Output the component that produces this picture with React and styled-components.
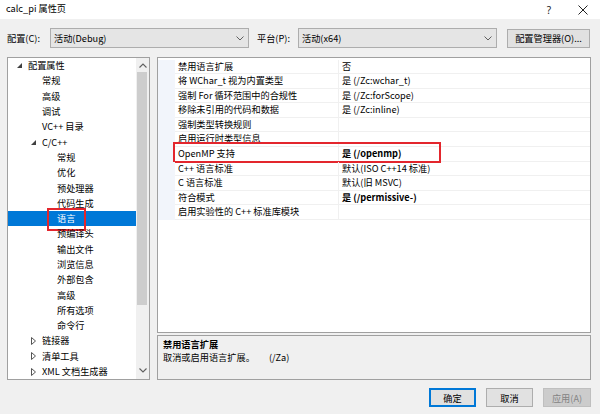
import React from 'react';
import styled, { createGlobalStyle } from 'styled-components';

const Global = createGlobalStyle`
  html, body { margin: 0; padding: 0; background: #f0f0f0; }
  body {
    font-family: "Noto Sans CJK SC", "Noto Sans", sans-serif;
    font-size: 9.2px;
    color: #000;
  }
  #root { width: 600px; height: 414px; }
`;

const Window = styled.div`
  width: 600px;
  height: 414px;
  display: flex;
  flex-direction: column;
  background: #f0f0f0;
  overflow: hidden;
`;

const TitleBar = styled.div`
  height: 19px;
  background: #fff;
  display: flex;
  align-items: center;
  padding-left: 6px;
`;

const Title = styled.div`
  flex: 1;
  line-height: 17px;
  margin-bottom: 2px;
`;

const TitleButton = styled.div`
  width: 34px;
  height: 19px;
  display: flex;
  align-items: center;
  justify-content: center;
  color: #222;
  font-family: "Noto Sans", sans-serif;
  font-size: 10px;
`;

const ConfigRow = styled.div`
  margin-top: 9px;
  height: 20px;
  display: flex;
  align-items: center;
  padding-left: 7px;
`;

const Label = styled.div`
  width: ${p => p.$w}px;
  margin-left: ${p => p.$ml || 0}px;
  line-height: 20px;
`;

const Select = styled.div`
  width: 199px;
  height: 20px;
  box-sizing: border-box;
  border: 1px solid #adadad;
  background: #e5e5e5;
  display: flex;
  align-items: center;
  padding: 0 3px 0 3px;
`;

const SelectText = styled.div`
  flex: 1;
  line-height: 18px;
`;

const Chevron = styled.svg`
  width: 8px;
  height: 5px;
  margin-right: 1px;
`;

const PushButton = styled.div`
  width: ${p => p.$w}px;
  height: ${p => p.$h}px;
  margin-left: ${p => p.$ml || 0}px;
  box-sizing: border-box;
  border: 1px solid ${p => (p.$primary ? '#0078d7' : p.$disabled ? '#bfbfbf' : '#adadad')};
  box-shadow: ${p => (p.$primary ? 'inset 0 0 0 1px #0078d7' : 'none')};
  background: ${p => (p.$disabled ? '#cccccc' : '#e1e1e1')};
  color: ${p => (p.$disabled ? '#838383' : '#000')};
  display: flex;
  align-items: center;
  justify-content: center;
  line-height: 14px;
`;

const Main = styled.div`
  margin-top: 9px;
  height: 323px;
  display: flex;
  gap: 7px;
  padding-left: 7px;
`;

const Tree = styled.div`
  width: 143px;
  box-sizing: border-box;
  border: 1px solid #a0a0a0;
  background: #fff;
  display: flex;
`;

const TreeList = styled.div`
  flex: 1;
  display: flex;
  flex-direction: column;
`;

const TreeRow = styled.div`
  position: relative;
  height: 15.3px;
  flex: 0 0 15.3px;
  display: flex;
  align-items: center;
  padding-left: ${p => p.$indent}px;
  background: ${p => (p.$selected ? '#0078d7' : 'transparent')};
  color: ${p => (p.$selected ? '#fff' : '#000')};
  white-space: nowrap;
`;

const ArrowSlot = styled.div`
  width: 11px;
  height: 15px;
  display: flex;
  align-items: center;
`;

const TreeLabel = styled.span`
  line-height: 15px;
`;

const Annotation = styled.div`
  position: absolute;
  left: ${p => p.$left}px;
  top: ${p => p.$top}px;
  width: ${p => p.$width}px;
  height: ${p => p.$height}px;
  box-sizing: border-box;
  border: 2px solid #e3262d;
  pointer-events: none;
`;

const ScrollBar = styled.div`
  width: 13px;
  background: #f0f0f0;
  display: flex;
  flex-direction: column;
`;

const ScrollArrow = styled.div`
  height: ${p => p.$h}px;
  display: flex;
  align-items: center;
  justify-content: center;
`;

const ScrollTrack = styled.div`
  flex: 1;
  display: flex;
  flex-direction: column;
  padding: 0 2px 0 1px;
`;

const Thumb = styled.div`
  height: 233px;
  background: #cdcdcd;
`;

const RightColumn = styled.div`
  width: 434px;
  display: flex;
  flex-direction: column;
  gap: 2px;
`;

const Grid = styled.div`
  flex: 1;
  box-sizing: border-box;
  border: 1px solid #a0a0a0;
  background: #fff;
  padding-top: 1.5px;
  display: flex;
  flex-direction: column;
`;

const GridRow = styled.div`
  position: relative;
  height: 14.6px;
  flex: 0 0 14.6px;
  display: grid;
  grid-template-columns: 17px 164px 1fr;
`;

const Gutter = styled.div`
  background: #f2f5fb;
`;

const Cell = styled.div`
  box-sizing: border-box;
  padding-left: 3px;
  border-bottom: 1px solid #f0f0f0;
  border-right: ${p => (p.$name ? '1px solid #f0f0f0' : 'none')};
  line-height: 13.6px;
  font-weight: ${p => (p.$bold ? 700 : 400)};
  white-space: nowrap;
  overflow: hidden;
`;

const Description = styled.div`
  height: 45px;
  box-sizing: border-box;
  border: 1px solid #a0a0a0;
  padding: 2px 5px;
`;

const DescTitle = styled.div`
  font-weight: 700;
  line-height: 13px;
`;

const DescText = styled.div`
  line-height: 13px;
`;

const DescSwitch = styled.span`
  margin-left: 14px;
`;

const Footer = styled.div`
  margin-top: 8px;
  display: flex;
  justify-content: flex-end;
  padding-right: 9px;
  gap: 10px;
`;

const ExpandedArrow = () => (
  <svg width="5" height="5" viewBox="0 0 5 5">
    <polygon points="5,0 5,5 0,5" fill="#404040" />
  </svg>
);

const CollapsedArrow = () => (
  <svg width="5" height="8" viewBox="0 0 5 8">
    <polygon points="0.5,0.5 4.5,4 0.5,7.5" fill="none" stroke="#555" strokeWidth="1" />
  </svg>
);

const SmallChevron = ({ up }) => (
  <svg width="8" height="5" viewBox="0 0 8 5">
    <polyline
      points={up ? '0.5,4.5 4,1 7.5,4.5' : '0.5,0.5 4,4 7.5,0.5'}
      fill="none"
      stroke="#606060"
      strokeWidth="1.1"
    />
  </svg>
);

const treeItems = [
  { label: '配置属性', level: 0, arrow: 'open' },
  { label: '常规', level: 1 },
  { label: '高级', level: 1 },
  { label: '调试', level: 1 },
  { label: 'VC++ 目录', level: 1 },
  { label: 'C/C++', level: 1, arrow: 'open' },
  { label: '常规', level: 2 },
  { label: '优化', level: 2 },
  { label: '预处理器', level: 2 },
  { label: '代码生成', level: 2 },
  { label: '语言', level: 2, selected: true },
  { label: '预编译头', level: 2 },
  { label: '输出文件', level: 2 },
  { label: '浏览信息', level: 2 },
  { label: '外部包含', level: 2 },
  { label: '高级', level: 2 },
  { label: '所有选项', level: 2 },
  { label: '命令行', level: 2 },
  { label: '链接器', level: 1, arrow: 'closed' },
  { label: '清单工具', level: 1, arrow: 'closed' },
  { label: 'XML 文档生成器', level: 1, arrow: 'closed' },
];

const indents = [9, 23, 38];

const props = [
  { name: '禁用语言扩展', value: '否' },
  { name: '将 WChar_t 视为内置类型', value: '是 (/Zc:wchar_t)' },
  { name: '强制 For 循环范围中的合规性', value: '是 (/Zc:forScope)' },
  { name: '移除未引用的代码和数据', value: '是 (/Zc:inline)' },
  { name: '强制类型转换规则', value: '' },
  { name: '启用运行时类型信息', value: '' },
  { name: 'OpenMP 支持', value: '是 (/openmp)', bold: true, mark: true },
  { name: 'C++ 语言标准', value: '默认(ISO C++14 标准)' },
  { name: 'C 语言标准', value: '默认(旧 MSVC)' },
  { name: '符合模式', value: '是 (/permissive-)', bold: true },
  { name: '启用实验性的 C++ 标准库模块', value: '' },
];

export default function App() {
  return (
    <Window>
      <Global />
      <TitleBar>
        <Title>calc_pi 属性页</Title>
        <TitleButton>?</TitleButton>
        <TitleButton>
          <svg width="10" height="10" viewBox="0 0 10 10">
            <path d="M0.5 0.5 L9.5 9.5 M9.5 0.5 L0.5 9.5" stroke="#222" strokeWidth="1" fill="none" />
          </svg>
        </TitleButton>
      </TitleBar>

      <ConfigRow>
        <Label $w={43}>配置(C):</Label>
        <Select>
          <SelectText>活动(Debug)</SelectText>
          <Chevron viewBox="0 0 8 5">
            <polyline points="0.5,0.5 4,4 7.5,0.5" fill="none" stroke="#606060" strokeWidth="1" />
          </Chevron>
        </Select>
        <Label $w={41} $ml={8}>平台(P):</Label>
        <Select>
          <SelectText>活动(x64)</SelectText>
          <Chevron viewBox="0 0 8 5">
            <polyline points="0.5,0.5 4,4 7.5,0.5" fill="none" stroke="#606060" strokeWidth="1" />
          </Chevron>
        </Select>
        <PushButton $w={83} $h={19} $ml={10}>配置管理器(O)...</PushButton>
      </ConfigRow>

      <Main>
        <Tree>
          <TreeList>
            {treeItems.map((it, i) => (
              <TreeRow key={i} $indent={indents[it.level]} $selected={it.selected}>
                <ArrowSlot>
                  {it.arrow === 'open' && <ExpandedArrow />}
                  {it.arrow === 'closed' && <CollapsedArrow />}
                </ArrowSlot>
                <TreeLabel>{it.label}</TreeLabel>
                {it.selected && <Annotation $left={39} $top={-3} $width={39} $height={23} />}
              </TreeRow>
            ))}
          </TreeList>
          <ScrollBar>
            <ScrollArrow $h={14}>
              <SmallChevron up />
            </ScrollArrow>
            <ScrollTrack>
              <Thumb />
            </ScrollTrack>
            <ScrollArrow $h={17}>
              <SmallChevron />
            </ScrollArrow>
          </ScrollBar>
        </Tree>

        <RightColumn>
          <Grid>
            {props.map((p, i) => (
              <GridRow key={i}>
                <Gutter />
                <Cell $name>{p.name}</Cell>
                <Cell $bold={p.bold}>{p.value}</Cell>
                {p.mark && <Annotation $left={15} $top={-5} $width={268} $height={21} />}
              </GridRow>
            ))}
          </Grid>
          <Description>
            <DescTitle>禁用语言扩展</DescTitle>
            <DescText>
              取消或启用语言扩展。<DescSwitch>(/Za)</DescSwitch>
            </DescText>
          </Description>
        </RightColumn>
      </Main>

      <Footer>
        <PushButton $w={47} $h={19} $primary>确定</PushButton>
        <PushButton $w={47} $h={19}>取消</PushButton>
        <PushButton $w={48} $h={19} $disabled>应用(A)</PushButton>
      </Footer>
    </Window>
  );
}
